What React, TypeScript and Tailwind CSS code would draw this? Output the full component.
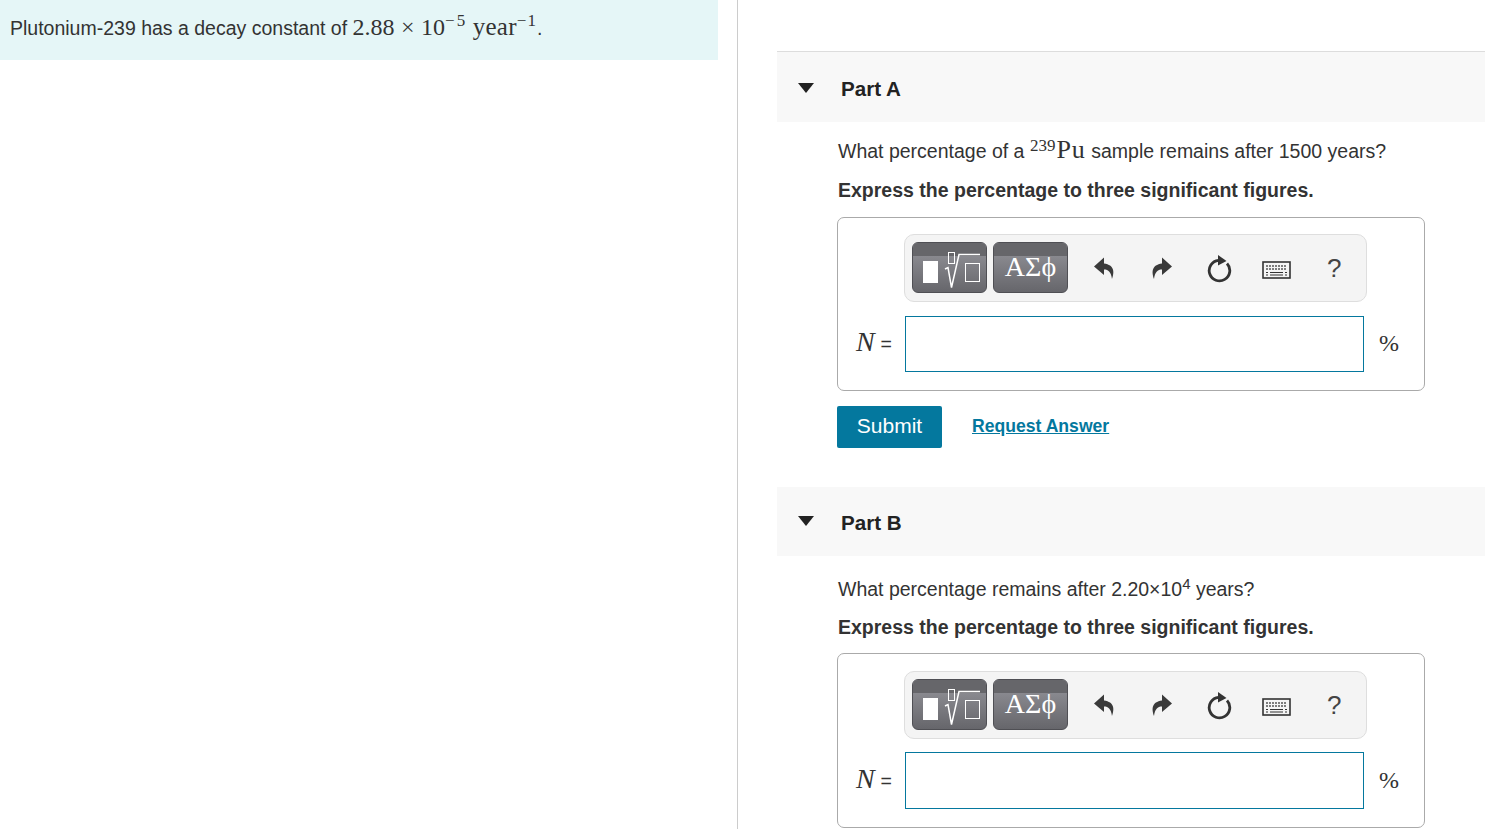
import React from 'react';

const Math_ = ({ children, className = '' }: { children: React.ReactNode; className?: string }) => (
    <span className={`font-['Liberation_Serif',serif] ${className}`}>{children}</span>
);

const TemplatesButton = () => (
    <div className="relative w-[75px] h-[51px] rounded-[6px] border border-[#4f4f54] bg-gradient-to-b from-[#96969c] to-[#66666b] overflow-hidden">
        <div className="absolute inset-x-0 top-0 h-[13px] bg-[#66666a]" />
        <svg className="absolute -left-px -top-px" width="75" height="51" viewBox="0 0 75 51" fill="none">
            <rect x="11" y="19" width="15" height="22" fill="#fff" />
            <rect x="36.500" y="10.500" width="6" height="11" stroke="#fff" />
            <path d="M33 27l3-1.500 3.500 20L47 12.500h21" stroke="#fff" strokeWidth="1.500" />
            <rect x="53.500" y="21.500" width="14" height="18" stroke="#fff" />
        </svg>
    </div>
);

const SymbolsButton = () => (
    <div className="relative w-[75px] h-[51px] rounded-[6px] border border-[#4f4f54] bg-gradient-to-b from-[#96969c] to-[#66666b] overflow-hidden flex items-center justify-center">
        <div className="absolute inset-x-0 top-0 h-[13px] bg-[#66666a]" />
        <span className="relative pb-[2px] font-['Liberation_Serif',serif] text-[28px] leading-none text-white">ΑΣϕ</span>
    </div>
);

const UndoIcon = ({ flip = false }: { flip?: boolean }) => (
    <svg width="22" height="24" viewBox="0 0 22 24" className={flip ? '-scale-x-100' : ''}>
        <path d="M11 1.500 1 10.500l10 8.500v-5.500c4.500 0 7 2.500 8 9.500 2.500-7 2.500-14-8-15.500z" fill="#3a3a3a" />
    </svg>
);

const ResetIcon = () => (
    <svg width="26" height="29" viewBox="0 0 26 29" fill="none">
        <path d="M11.500 6.300A10.300 10.300 0 1 0 20 9.500" stroke="#333" strokeWidth="2.800" />
        <path d="M11 1l8.500 6-8.500 4.500z" fill="#333" />
    </svg>
);

const KeyboardIcon = () => (
    <svg width="29" height="18" viewBox="0 0 29 18" fill="none">
        <rect x="1" y="1" width="27" height="16" stroke="#333" strokeWidth="1.600" />
        <path d="M4 5h21M4 8h21" stroke="#555" strokeWidth="1.500" strokeDasharray="2 1" />
        <path d="M4 11.500h2M8 11.500h13M23 11.500h2M4 14h2M8 14h13M23 14h2" stroke="#333" strokeWidth="1.200" />
    </svg>
);

const Toolbar = () => (
    <div className="w-[463px] h-[68px] ml-[66px] flex items-center pl-[7px] rounded-[10px] border border-[#dedede] bg-[#f4f4f4]">
        <div className="-mt-[1px]"><TemplatesButton /></div>
        <div className="ml-[6px] -mt-[1px]"><SymbolsButton /></div>
        <div className="ml-[25px]"><UndoIcon /></div>
        <div className="ml-[36px]"><UndoIcon flip /></div>
        <div className="ml-[34px]"><ResetIcon /></div>
        <div className="ml-[29px] mt-[4px]"><KeyboardIcon /></div>
        <span className="ml-[36px] -mt-[1px] text-[26px] leading-none text-[#444]">?</span>
    </div>
);

const AnswerBox = ({ tall = false }: { tall?: boolean }) => (
    <div className={`w-[588px] rounded-[7px] border border-[#aaaaaa] ${tall ? 'h-[175px] pt-[17px]' : 'h-[174px] pt-[16px]'}`}>
        <Toolbar />
        <div className={`flex items-center ${tall ? 'h-[57px] mt-[13px]' : 'h-[56px] mt-[14px]'}`}>
            <div className="w-[67px] pr-[13px] flex justify-end items-baseline text-[19.500px] text-[#333]">
                <Math_ className="italic text-[28px] leading-none">N</Math_>
                <span className="ml-[6px]">=</span>
            </div>
            <div className={`w-[459px] border border-[#04789e] bg-white ${tall ? 'h-[57px]' : 'h-[56px]'}`} />
            <Math_ className="ml-[15px] -mt-[2px] text-[24px] text-[#333]">%</Math_>
        </div>
    </div>
);

const PartHeader = ({ label, border = false }: { label: string; border?: boolean }) => (
    <div className={`flex items-center bg-[#f8f8f8] ${border ? 'h-[71px] border-t border-[#dddddd] pt-[4px]' : 'h-[69px] pt-[2px]'}`}>
        <svg width="16" height="10" viewBox="0 0 16 10" className="ml-[21px] mb-[3px]">
            <path d="M0 0h16L8 10z" fill="#222" />
        </svg>
        <span className={`ml-[27px] text-[20.600px] font-bold text-[#222] ${border ? '' : 'pt-[2px]'}`}>{label}</span>
    </div>
);

export default function App() {
    return (
        <div className="w-[1485px] h-[829px] overflow-hidden bg-white flex font-['Liberation_Sans',Arial,sans-serif] text-[#333]">
            {/* Left: problem statement */}
            <div className="w-[738px] shrink-0 border-r border-[#cccccc]">
                <div className="w-[718px] h-[60px] bg-[#e5f6f7] pl-[10px] pt-[13px] text-[19.500px] leading-[28px] whitespace-nowrap">
                    Plutonium-239 has a decay constant of{' '}
                    <Math_ className="text-[24px]">2.88 <span className="mx-[0.5px]">×</span> 10</Math_>
                    <Math_ className="text-[17px] tracking-[2px] relative -top-[9px]">−5</Math_>{' '}
                    <Math_ className="text-[25px] tracking-[0.3px]">year</Math_>
                    <Math_ className="text-[17px] tracking-[1px] relative -top-[9px]">−1</Math_>.
                </div>
            </div>

            {/* Right: parts */}
            <div className="flex-1 pl-[39px] pt-[51px]">
                <PartHeader label="Part A" border />
                <div className="pl-[60px]">
                    <p className="mt-[14px] ml-px h-[28px] text-[19.500px] leading-[28px] whitespace-nowrap">
                        What percentage of a{' '}
                        <Math_ className="text-[17px] relative -top-[7px]">239</Math_>
                        <Math_ className="text-[26px] ml-[1px] tracking-[1px]">Pu</Math_> sample remains after 1500 years?
                    </p>
                    <p className="mt-[12px] ml-px h-[28px] text-[19.500px] leading-[28px] font-bold whitespace-nowrap">Express the percentage to three significant figures.</p>
                    <div className="mt-[13px]"><AnswerBox /></div>
                    <div className="mt-[15px] flex items-center">
                        <div className="w-[105px] h-[42px] rounded-[2px] bg-[#04789e] text-white text-[21px] pb-[2px] flex items-center justify-center">Submit</div>
                        <a className="ml-[30px] pb-[2px] text-[17.600px] font-bold text-[#04789e] underline">Request Answer</a>
                    </div>
                </div>

                <div className="mt-[39px]"><PartHeader label="Part B" /></div>
                <div className="pl-[60px]">
                    <p className="mt-[19px] ml-px h-[28px] text-[19.500px] leading-[28px] whitespace-nowrap">
                        What percentage remains after 2.20×10<sup className="text-[15px]">4</sup> years?
                    </p>
                    <p className="mt-[10px] ml-px h-[28px] text-[19.500px] leading-[28px] font-bold whitespace-nowrap">Express the percentage to three significant figures.</p>
                    <div className="mt-[12px]"><AnswerBox tall /></div>
                </div>
            </div>
        </div>
    );
}
